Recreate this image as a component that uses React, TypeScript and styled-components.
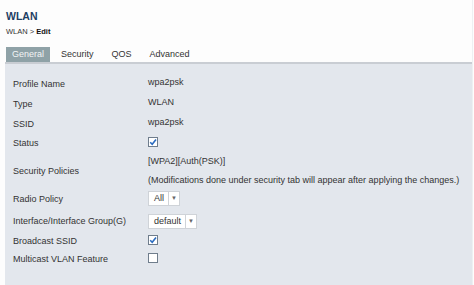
import React from 'react';
import styled, { createGlobalStyle } from 'styled-components';

const GlobalStyle = createGlobalStyle`
  html, body {
    margin: 0;
    padding: 0;
    background: #fdfdfd;
  }
  body {
    font-family: "Liberation Sans", Arial, sans-serif;
    color: #333;
  }
`;

const Frame = styled.div`
  width: 467px;
  margin-left: 5px;
  height: 285px;
  display: flex;
  flex-direction: column;
  border-right: 1px solid #eef0f2;
`;

const Title = styled.div`
  padding: 9px 0 0 1px;
  height: 14px;
  font-size: 10.5px;
  font-weight: bold;
  color: #1d3f63;
  line-height: 14px;
`;

const Crumb = styled.div`
  padding: 4px 0 0 1px;
  height: 10px;
  font-size: 7.5px;
  line-height: 10px;
  color: #333;

  b {
    color: #111;
  }
`;

const TabBar = styled.div`
  margin-top: 10px;
  display: flex;
  align-items: stretch;
  height: 15px;
  padding-left: 1px;
  border-bottom: 2px solid #c9cdd3;
`;

const Tab = styled.div<{ $active?: boolean }>`
  padding: 0 ${(p) => (p.$active ? '6px' : '9px')};
  margin-right: ${(p) => (p.$active ? '2px' : '0')};
  font-size: 9px;
  line-height: 15px;
  color: ${(p) => (p.$active ? '#f2f5f6' : '#333')};
  background: ${(p) => (p.$active ? '#8fa2a7' : 'transparent')};
`;

const Panel = styled.div`
  flex: 1;
  background: #e3e7ed;
  padding: 10px 0 0 8px;
`;

const Row = styled.div<{ $h: number }>`
  display: grid;
  grid-template-columns: 135px 1fr;
  align-items: center;
  height: ${(p) => p.$h}px;
  font-size: 9px;
`;

const Label = styled.div`
  color: #333;
`;

const Value = styled.div<{ $shift?: number }>`
  color: #333;
  transform: translateY(${(p) => p.$shift ?? 0}px);
`;

const Lines = styled.div`
  line-height: 19px;
`;

const Box = styled.span`
  display: inline-flex;
  align-items: center;
  justify-content: center;
  width: 8px;
  height: 8px;
  border: 1px solid #6f7d8c;
  background: #fff;
  vertical-align: middle;

  svg {
    display: block;
  }
`;

const Select = styled.span`
  display: inline-flex;
  align-items: stretch;
  height: 13px;
  background: #fff;
  border: 1px solid #cfd3d8;
  font-size: 9px;
  line-height: 13px;
`;

const SelectText = styled.span`
  padding: 0 4px 0 5px;
`;

const SelectArrow = styled.span`
  display: flex;
  align-items: center;
  justify-content: center;
  width: 10px;
  border-left: 1px solid #cfd3d8;
  font-size: 6px;
  color: #666;
`;

const Check: React.FC<{ checked?: boolean }> = ({ checked }) => (
  <Box>
    {checked && (
      <svg width="8" height="8" viewBox="0 0 8 8">
        <path d="M1.2 4.2 L3.2 6.2 L7 1.4" fill="none" stroke="#2b6cc0" strokeWidth="1.6" />
      </svg>
    )}
  </Box>
);

const Dropdown: React.FC<{ text: string }> = ({ text }) => (
  <Select>
    <SelectText>{text}</SelectText>
    <SelectArrow>▼</SelectArrow>
  </Select>
);

export default function App() {
  return (
    <>
      <GlobalStyle />
      <Frame>
        <Title>WLAN</Title>
        <Crumb>
          WLAN &gt; <b>Edit</b>
        </Crumb>
        <TabBar>
          <Tab $active>General</Tab>
          <Tab>Security</Tab>
          <Tab>QOS</Tab>
          <Tab>Advanced</Tab>
        </TabBar>
        <Panel>
          <Row $h={20}>
            <Label>Profile Name</Label>
            <Value $shift={-2}>wpa2psk</Value>
          </Row>
          <Row $h={20}>
            <Label>Type</Label>
            <Value $shift={-2}>WLAN</Value>
          </Row>
          <Row $h={20}>
            <Label>SSID</Label>
            <Value $shift={-2}>wpa2psk</Value>
          </Row>
          <Row $h={18}>
            <Label>Status</Label>
            <Value $shift={-1}>
              <Check checked />
            </Value>
          </Row>
          <Row $h={36}>
            <Label>Security Policies</Label>
            <Lines>
              <div>[WPA2][Auth(PSK)]</div>
              <div>(Modifications done under security tab will appear after applying the changes.)</div>
            </Lines>
          </Row>
          <Row $h={22}>
            <Label>Radio Policy</Label>
            <Value $shift={-1}>
              <Dropdown text="All" />
            </Value>
          </Row>
          <Row $h={22}>
            <Label>Interface/Interface Group(G)</Label>
            <Value>
              <Dropdown text="default" />
            </Value>
          </Row>
          <Row $h={18}>
            <Label>Broadcast SSID</Label>
            <Value $shift={-1}>
              <Check checked />
            </Value>
          </Row>
          <Row $h={17}>
            <Label>Multicast VLAN Feature</Label>
            <Value $shift={-1}>
              <Check />
            </Value>
          </Row>
        </Panel>
      </Frame>
    </>
  );
}
